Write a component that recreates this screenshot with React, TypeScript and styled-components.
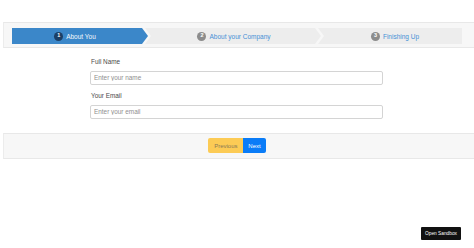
import React from "react";
import styled, { createGlobalStyle, css } from "styled-components";

const Global = createGlobalStyle`
  html, body { margin: 0; padding: 0; background: #fff; }
  body { font-family: "Liberation Sans", Arial, sans-serif; color: #333; }
  * { box-sizing: border-box; }
`;

const Page = styled.div`
  padding-top: 22px;
  width: 474px;
  height: 248px;
`;

const Band = styled.div`
  background: #f7f7f7;
  border-top: 1px solid #e8e8e8;
  border-bottom: 1px solid #e8e8e8;
  border-left: 1px solid #ececec;
  margin-left: 3px;
`;

const StepsBand = styled(Band)`
  padding: 5px 0 3px 8px;
  height: 26px;
`;

const Steps = styled.div`
  display: flex;
  width: 450px;
  height: 16px;
`;

type Pos = "first" | "middle" | "last";

const Step = styled.div<{ $pos: Pos; $w: number; $shift?: number; $active?: boolean }>`
  flex: 0 0 ${(p) => p.$w}px;
  display: flex;
  align-items: center;
  justify-content: center;
  gap: 3px;
  height: 16px;
  padding: 0 ${(p) => 6 - (p.$shift ?? 0)}px 0 ${(p) => 6 + (p.$shift ?? 0)}px;
  font-size: 6.5px;
  background: ${(p) => (p.$active ? "#3b87c9" : "#ededed")};
  color: ${(p) => (p.$active ? "#f4f8fc" : "#4690d6")};
  ${(p) =>
    p.$pos !== "first" &&
    css`
      margin-left: -3px;
    `}
  clip-path: ${(p) =>
    p.$pos === "first"
      ? "polygon(0 0, calc(100% - 6px) 0, 100% 50%, calc(100% - 6px) 100%, 0 100%)"
      : p.$pos === "middle"
      ? "polygon(0 0, calc(100% - 6px) 0, 100% 50%, calc(100% - 6px) 100%, 0 100%, 6px 50%)"
      : "polygon(0 0, 100% 0, 100% 100%, 0 100%, 6px 50%)"};
`;

const Num = styled.span<{ $active?: boolean }>`
  width: 9px;
  height: 9px;
  border-radius: 50%;
  background: ${(p) => (p.$active ? "#1c3f66" : "#8c8c8c")};
  color: #fff;
  font-size: 5.5px;
  font-weight: bold;
  display: flex;
  align-items: center;
  justify-content: center;
  line-height: 1;
`;

const Form = styled.div`
  width: 293px;
  margin: 0 auto;
  padding: 9px 0 14px 0;
  position: relative;
  left: -0.5px;
`;

const Group = styled.div<{ $gap?: number }>`
  margin-top: ${(p) => p.$gap ?? 0}px;
`;

const Label = styled.label`
  display: block;
  font-size: 6.4px;
  line-height: 9px;
  color: #4a4a4a;
  margin-bottom: 4.5px;
  padding-left: 1px;
`;

const Input = styled.input`
  display: block;
  width: 100%;
  height: 14px;
  padding: 0 3px;
  font-family: "Liberation Sans", Arial, sans-serif;
  font-size: 6.4px;
  border: 0.5px solid #d4d4d4;
  border-radius: 2px;
  background: #fff;
  color: #555;
  outline: none;
  &::placeholder { color: #8f8f8f; }
`;

const FooterBand = styled(Band)`
  height: 26px;
  display: flex;
  justify-content: center;
  align-items: flex-start;
  padding-top: 4.5px;
  padding-right: 4px;
`;

const BtnGroup = styled.div`
  display: flex;
`;

const Btn = styled.button<{ $variant: "warn" | "primary" }>`
  height: 15px;
  font-family: "Liberation Sans", Arial, sans-serif;
  font-size: 6px;
  border: none;
  padding: 0 ${(p) => (p.$variant === "warn" ? 5.8 : 5)}px;
  background: ${(p) => (p.$variant === "warn" ? "#fccb55" : "#0a7cf7")};
  color: ${(p) => (p.$variant === "warn" ? "#8b7a55" : "#fff")};
  border-radius: ${(p) => (p.$variant === "warn" ? "2px 0 0 2px" : "0 2px 2px 0")};
`;

const Sandbox = styled.div`
  position: fixed;
  right: 13px;
  bottom: 8px;
  width: 40px;
  height: 13px;
  background: #111;
  color: #fff;
  font-size: 4.8px;
  display: flex;
  align-items: center;
  justify-content: center;
  border-radius: 1px;
`;

export default function App() {
  return (
    <>
      <Global />
      <Page>
        <StepsBand>
          <Steps>
            <Step $pos="first" $w={136} $shift={-5} $active>
              <Num $active>1</Num>
              <span>About You</span>
            </Step>
            <Step $pos="middle" $w={176} $shift={1}>
              <Num>2</Num>
              <span>About your Company</span>
            </Step>
            <Step $pos="last" $w={144} $shift={5}>
              <Num>3</Num>
              <span>Finishing Up</span>
            </Step>
          </Steps>
        </StepsBand>
        <Form>
          <Group>
            <Label>Full Name</Label>
            <Input placeholder="Enter your name" />
          </Group>
          <Group $gap={6.5}>
            <Label>Your Email</Label>
            <Input placeholder="Enter your email" />
          </Group>
        </Form>
        <FooterBand>
          <BtnGroup>
            <Btn $variant="warn">Previous</Btn>
            <Btn $variant="primary">Next</Btn>
          </BtnGroup>
        </FooterBand>
        <Sandbox>Open Sandbox</Sandbox>
      </Page>
    </>
  );
}
